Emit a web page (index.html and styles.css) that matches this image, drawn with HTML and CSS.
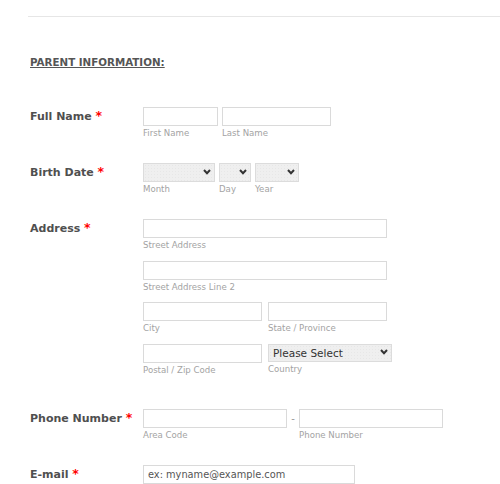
FILE: index.html
```html
<!DOCTYPE html>
<html lang="en">
<head>
    <meta charset="UTF-8">
    <meta name="viewport" content="width=device-width, initial-scale=1.0">
    <title>Parent Information</title>
    <link rel="stylesheet" href="styles.css">
</head>
<body>
    <hr class="divider">

    <div class="form-wrap">
        <h2 class="section-title">PARENT INFORMATION:</h2>

        <ul class="form-list">
            <li class="form-line">
                <label class="form-label" for="first">Full Name <span class="req">*</span></label>
                <div class="form-input">
                    <div class="field-row">
                        <div class="field">
                            <input type="text" id="first" class="text-box w-first">
                            <span class="sublabel">First Name</span>
                        </div>
                        <div class="field">
                            <input type="text" id="last" class="text-box w-last">
                            <span class="sublabel">Last Name</span>
                        </div>
                    </div>
                </div>
            </li>

            <li class="form-line">
                <label class="form-label" for="month">Birth Date <span class="req">*</span></label>
                <div class="form-input">
                    <div class="field-row">
                        <div class="field">
                            <span class="select-wrap w-month">
                                <select id="month" class="select-box"><option></option></select>
                                <svg class="chevron" width="8" height="6" viewBox="0 0 8 6"><polyline points="1,1 4,4.2 7,1" fill="none" stroke="#333" stroke-width="2"/></svg>
                            </span>
                            <span class="sublabel">Month</span>
                        </div>
                        <div class="field">
                            <span class="select-wrap w-day">
                                <select id="day" class="select-box"><option></option></select>
                                <svg class="chevron" width="8" height="6" viewBox="0 0 8 6"><polyline points="1,1 4,4.2 7,1" fill="none" stroke="#333" stroke-width="2"/></svg>
                            </span>
                            <span class="sublabel">Day</span>
                        </div>
                        <div class="field">
                            <span class="select-wrap w-year">
                                <select id="year" class="select-box"><option></option></select>
                                <svg class="chevron" width="8" height="6" viewBox="0 0 8 6"><polyline points="1,1 4,4.2 7,1" fill="none" stroke="#333" stroke-width="2"/></svg>
                            </span>
                            <span class="sublabel">Year</span>
                        </div>
                    </div>
                </div>
            </li>

            <li class="form-line address">
                <label class="form-label" for="street">Address <span class="req">*</span></label>
                <div class="form-input">
                    <div class="field-row">
                        <div class="field">
                            <input type="text" id="street" class="text-box w-full">
                            <span class="sublabel">Street Address</span>
                        </div>
                    </div>
                    <div class="field-row">
                        <div class="field">
                            <input type="text" class="text-box w-full">
                            <span class="sublabel">Street Address Line 2</span>
                        </div>
                    </div>
                    <div class="field-row wide-gap">
                        <div class="field">
                            <input type="text" class="text-box w-half">
                            <span class="sublabel">City</span>
                        </div>
                        <div class="field">
                            <input type="text" class="text-box w-half">
                            <span class="sublabel">State / Province</span>
                        </div>
                    </div>
                    <div class="field-row wide-gap">
                        <div class="field">
                            <input type="text" class="text-box w-half">
                            <span class="sublabel">Postal / Zip Code</span>
                        </div>
                        <div class="field">
                            <span class="select-wrap w-country">
                                <select class="select-box country"><option>Please Select</option></select>
                                <svg class="chevron" width="8" height="6" viewBox="0 0 8 6"><polyline points="1,1 4,4.2 7,1" fill="none" stroke="#333" stroke-width="2"/></svg>
                            </span>
                            <span class="sublabel">Country</span>
                        </div>
                    </div>
                </div>
            </li>

            <li class="form-line">
                <label class="form-label" for="area">Phone Number <span class="req">*</span></label>
                <div class="form-input">
                    <div class="field-row no-gap">
                        <div class="field">
                            <input type="text" id="area" class="text-box w-phone">
                            <span class="sublabel">Area Code</span>
                        </div>
                        <span class="dash">-</span>
                        <div class="field">
                            <input type="text" class="text-box w-phone">
                            <span class="sublabel">Phone Number</span>
                        </div>
                    </div>
                </div>
            </li>

            <li class="form-line">
                <label class="form-label" for="email">E-mail <span class="req">*</span></label>
                <div class="form-input">
                    <input type="email" id="email" class="text-box w-email" placeholder="ex: myname@example.com">
                </div>
            </li>
        </ul>
    </div>
</body>
</html>
```

FILE: styles.css
```css
body {
    margin: 0;
    font-family: "DejaVu Sans", Verdana, sans-serif;
    background: #fff;
    color: #555;
}

.divider {
    margin: 16px 0 0 28px;
    height: 0;
    border: none;
    border-top: 1px solid #e6e6e6;
}

.form-wrap {
    padding-left: 30px;
}

.section-title {
    margin: 39px 0 0;
    font-size: 10.3px;
    line-height: 12px;
    font-weight: bold;
    text-decoration: underline;
    color: #555;
}

.form-list {
    list-style: none;
    margin: 39px 0 0;
    padding: 0;
}

.form-line {
    display: flex;
    margin-bottom: 24px;
}

.form-line.address {
    margin-bottom: 33px;
}

.form-label {
    width: 113px;
    height: 19px;
    flex-shrink: 0;
    font-size: 11px;
    line-height: 19px;
    font-weight: bold;
    color: #4f4f4f;
}

.req {
    color: #f00;
    font-size: 12.5px;
    line-height: 1;
}

.form-input {
    display: flex;
    flex-direction: column;
    gap: 9.6px;
}

.field-row {
    display: flex;
    gap: 4px;
}

.field-row.wide-gap {
    gap: 6px;
}

.field-row.no-gap {
    gap: 0;
}

.field {
    display: flex;
    flex-direction: column;
    align-items: flex-start;
}

.text-box {
    box-sizing: border-box;
    height: 19px;
    margin: 0;
    padding: 0 4px;
    border: 1px solid #dadada;
    background: #fff;
    font-family: inherit;
    font-size: 9.8px;
    color: #555;
    outline: none;
}

.text-box::placeholder {
    color: #555;
}

.w-first { width: 75px; }
.w-last { width: 109px; }
.w-full { width: 244px; }
.w-half { width: 119px; }
.w-phone { width: 144px; }
.w-email { width: 212px; }

.select-wrap {
    position: relative;
    display: block;
    height: 19px;
}

.w-month { width: 72px; }
.w-day { width: 32px; }
.w-year { width: 44px; }
.w-country { width: 124px; height: 18px; }

.select-box {
    -webkit-appearance: none;
    appearance: none;
    box-sizing: border-box;
    display: block;
    width: 100%;
    height: 100%;
    margin: 0;
    padding: 0 4px;
    border: 1px solid #dcdcdc;
    border-radius: 0;
    background-color: #efefef;
    background-image: radial-gradient(#e7e7e7 0.5px, transparent 0.6px);
    background-size: 3px 3px;
    font-family: inherit;
    font-size: 10.5px;
    line-height: 16px;
    color: #333;
    outline: none;
}

.chevron {
    position: absolute;
    right: 4px;
    top: 6px;
    pointer-events: none;
}

.w-country .chevron {
    top: 5.5px;
}

.sublabel {
    margin-top: 2px;
    font-size: 8.6px;
    line-height: 11px;
    color: #a3a3a3;
    white-space: nowrap;
}

.dash {
    width: 12px;
    text-align: center;
    font-size: 10px;
    line-height: 19px;
    color: #999;
}
```
